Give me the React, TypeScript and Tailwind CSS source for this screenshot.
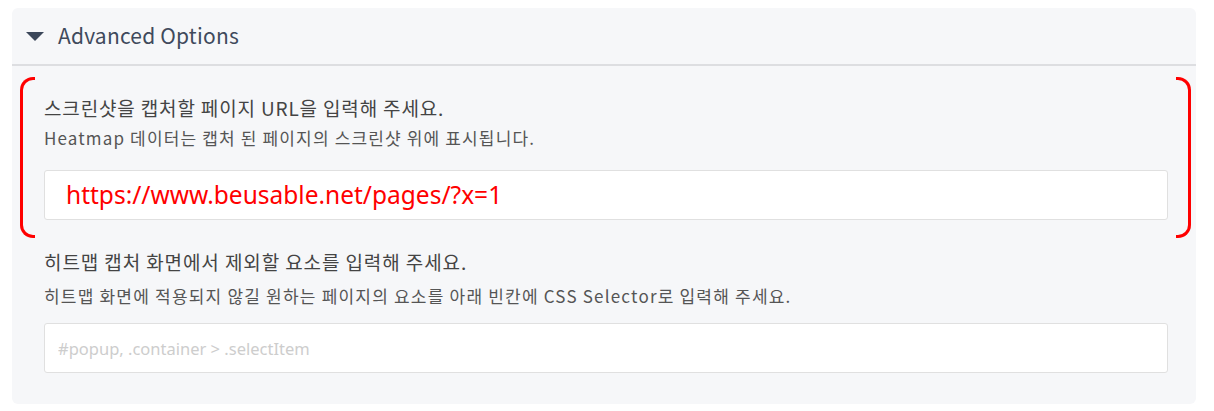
import React from 'react';

const font = { fontFamily: '"Noto Sans CJK KR", "Noto Sans", sans-serif' };

function Bracket({ side }: { side: 'left' | 'right' }) {
  return (
    <div
      className={`absolute top-[11px] h-[161px] w-[15px] border-y-[3px] border-[#ff0000] ${
        side === 'left'
          ? 'left-[8px] border-l-[3px] rounded-l-[13px]'
          : 'right-[5px] border-r-[3px] rounded-r-[13px]'
      }`}
    />
  );
}

export default function App() {
  return (
    <div className="w-[1214px] h-[411px] bg-white pt-2 px-3" style={font}>
      <div className="bg-[#f6f7f9] rounded-md h-[396px] w-[1184px]">
        <div className="h-[58px] flex items-center pl-[14px] border-b-2 border-[#dddee1]">
          <span className="w-0 h-0 border-l-[9px] border-r-[9px] border-t-[9px] border-l-transparent border-r-transparent border-t-[#3b475a]" />
          <span className="ml-[14px] text-[21px] text-[#3f4a5c] tracking-[0.2px]">Advanced Options</span>
        </div>

        <div className="relative pl-8 pr-7 pt-[30px]">
          <Bracket side="left" />
          <Bracket side="right" />

          <p className="text-[19px] leading-6 tracking-[0.85px] text-[#444]">스크린샷을 캡처할 페이지 URL을 입력해 주세요.</p>
          <p className="mt-2 text-[17px] leading-5 tracking-[1.15px] text-[#555]">Heatmap 데이터는 캡처 된 페이지의 스크린샷 위에 표시됩니다.</p>
          <div className="mt-[22px] h-[50px] bg-white border border-[#e0e0e0] rounded-[3px] flex items-center pl-[21px]">
            <span className="text-[24.5px] text-[#ff0000]" style={{ fontFamily: '"Noto Sans", sans-serif' }}>
              https://www.beusable.net/pages/?x=1
            </span>
          </div>

          <p className="mt-[30px] text-[19px] leading-6 tracking-[0.9px] text-[#444]">히트맵 캡처 화면에서 제외할 요소를 입력해 주세요.</p>
          <p className="mt-3 text-[17px] leading-5 tracking-[1.2px] text-[#555]">
            히트맵 화면에 적용되지 않길 원하는 페이지의 요소를 아래 빈칸에 CSS Selector로 입력해 주세요.
          </p>
          <input
            className="mt-[17px] block w-full h-[50px] bg-white border border-[#e0e0e0] rounded-[3px] pl-[13px] text-[16.5px] outline-none placeholder:text-[#cdcdcd]"
            placeholder="#popup, .container > .selectItem"
            style={{ fontFamily: '"Noto Sans", sans-serif' }}
          />
        </div>
      </div>
    </div>
  );
}
